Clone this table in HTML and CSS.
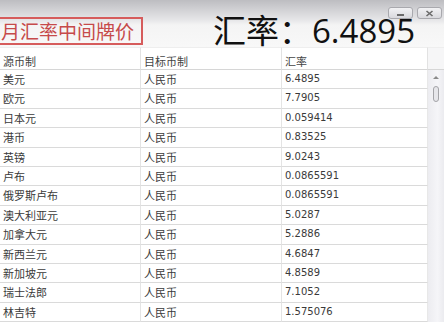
FILE: index.html
```html
<!DOCTYPE html>
<html lang="zh">
<head>
<meta charset="utf-8">
<title>月汇率中间牌价</title>
<link rel="stylesheet" href="styles.css">
</head>
<body>
<div class="window">
  <div class="top">
    <div class="title-box">月汇率中间牌价</div>
    <div class="big"><span class="big-cjk">汇率：</span>6.4895</div>
    <div class="controls">
      <span class="btn"><span class="min-bar"></span></span>
      <span class="btn"><svg width="9" height="7" viewBox="0 0 9 7"><path d="M1.5 1 L7.5 6 M7.5 1 L1.5 6" stroke="#6a6a6a" stroke-width="1.6" fill="none"/></svg></span>
    </div>
  </div>
  <div class="thead">
    <div class="th c1">源币制</div>
    <div class="th c2">目标币制</div>
    <div class="th c3">汇率</div>
    <div class="th c4"></div>
  </div>
  <div class="tbody">
    <div class="rows">
      <div class="tr"><div class="td c1">美元</div><div class="td c2">人民币</div><div class="td c3 num">6.4895</div></div>
      <div class="tr"><div class="td c1">欧元</div><div class="td c2">人民币</div><div class="td c3 num">7.7905</div></div>
      <div class="tr"><div class="td c1">日本元</div><div class="td c2">人民币</div><div class="td c3 num">0.059414</div></div>
      <div class="tr"><div class="td c1">港币</div><div class="td c2">人民币</div><div class="td c3 num">0.83525</div></div>
      <div class="tr"><div class="td c1">英镑</div><div class="td c2">人民币</div><div class="td c3 num">9.0243</div></div>
      <div class="tr"><div class="td c1">卢布</div><div class="td c2">人民币</div><div class="td c3 num">0.0865591</div></div>
      <div class="tr"><div class="td c1">俄罗斯卢布</div><div class="td c2">人民币</div><div class="td c3 num">0.0865591</div></div>
      <div class="tr"><div class="td c1">澳大利亚元</div><div class="td c2">人民币</div><div class="td c3 num">5.0287</div></div>
      <div class="tr"><div class="td c1">加拿大元</div><div class="td c2">人民币</div><div class="td c3 num">5.2886</div></div>
      <div class="tr"><div class="td c1">新西兰元</div><div class="td c2">人民币</div><div class="td c3 num">4.6847</div></div>
      <div class="tr"><div class="td c1">新加坡元</div><div class="td c2">人民币</div><div class="td c3 num">4.8589</div></div>
      <div class="tr"><div class="td c1">瑞士法郎</div><div class="td c2">人民币</div><div class="td c3 num">7.1052</div></div>
      <div class="tr"><div class="td c1">林吉特</div><div class="td c2">人民币</div><div class="td c3 num">1.575076</div></div>
    </div>
    <div class="vscroll">
      <span class="arrow-up"></span>
      <span class="thumb"></span>
    </div>
  </div>
</div>
</body>
</html>
```
FILE: styles.css
```css
html, body {
  margin: 0;
  padding: 0;
}
body {
  width: 444px;
  height: 322px;
  overflow: hidden;
  background: #ffffff;
  font-family: "DejaVu Sans", "Noto Sans CJK SC", sans-serif;
}
.window {
  width: 444px;
  height: 322px;
  display: flex;
  flex-direction: column;
}
.top {
  position: relative;
  height: 47px;
  flex: none;
  display: flex;
  align-items: flex-start;
  background: linear-gradient(to bottom, #bdbdc1 0px, #d6d6d9 12px, #e6e6e8 20px, #f4f4f4 25px, #f8f8f8 47px);
}
.title-box {
  margin-top: 17px;
  margin-left: -3px;
  width: 146px;
  height: 28px;
  box-sizing: border-box;
  border: 2px solid #d65c5c;
  padding-left: 2px;
  color: #c64a4a;
  font-family: "Noto Sans CJK SC", sans-serif;
  font-size: 19px;
  line-height: 24px;
  white-space: nowrap;
  overflow: hidden;
}
.big {
  margin-left: 70px;
  margin-top: 11px;
  font-family: "Open Sans", "Noto Sans CJK SC", sans-serif;
  font-size: 33px;
  line-height: 37px;
  color: #111111;
  white-space: nowrap;
}
.big-cjk {
  font-family: "Noto Sans CJK SC", sans-serif;
}
.controls {
  position: absolute;
  top: 7px;
  right: 2px;
  display: flex;
  gap: 4px;
}
.btn {
  width: 25px;
  height: 12px;
  box-sizing: border-box;
  border: 1px solid #a9a9ae;
  border-radius: 3px;
  background: linear-gradient(to bottom, #f2f2f4, #d9d9dd);
  display: flex;
  align-items: center;
  justify-content: center;
}
.min-bar {
  width: 7px;
  height: 2px;
  margin-top: 4px;
  background: #6a6a6a;
}
.thead {
  display: flex;
  height: 23px;
  flex: none;
  background: #ffffff;
}
.th {
  box-sizing: border-box;
  height: 23px;
  padding: 5px 0 0 3px;
  border-right: 1px solid #e2e2e2;
  border-bottom: 1px solid #d6d6d6;
  border-top: 1px solid #eeeeee;
  font-family: "Noto Sans CJK SC", sans-serif;
  font-size: 11px;
  line-height: 16px;
  color: #444444;
}
.c1 { width: 141px; }
.c2 { width: 141px; }
.c3 { width: 146px; }
.c4 { width: 16px; border-right: none; background: #f6f6f7; }
.tbody {
  flex: 1;
  display: flex;
  min-height: 0;
}
.rows {
  width: 428px;
  display: flex;
  flex-direction: column;
}
.tr {
  display: flex;
  height: 19.4px;
  flex: none;
}
.td {
  box-sizing: border-box;
  padding-left: 3px;
  border-right: 1px solid #e4e4e4;
  border-bottom: 1px solid #dadada;
  font-size: 11px;
  line-height: 18px;
  color: #3a3a3a;
  white-space: nowrap;
  font-family: "Noto Sans CJK SC", sans-serif;
}
.td.c3 { border-right: 1px solid #e8e8e8; }
.num {
  font-family: "DejaVu Sans", sans-serif;
  font-size: 10px;
}
.vscroll {
  position: relative;
  width: 16px;
  box-sizing: border-box;
  background: linear-gradient(to right, #ececf0, #f5f5f8 60%, #ebebef);
  display: flex;
  flex-direction: column;
  align-items: center;
}
.arrow-up {
  margin-top: 6px;
  width: 0;
  height: 0;
  border-left: 3px solid transparent;
  border-right: 3px solid transparent;
  border-bottom: 3px solid #8a8a8a;
}
.thumb {
  margin-top: 7px;
  width: 6px;
  height: 16px;
  box-sizing: border-box;
  border: 1px solid #a4a4a8;
  border-radius: 3px;
  background: #e6e6ea;
}
```
